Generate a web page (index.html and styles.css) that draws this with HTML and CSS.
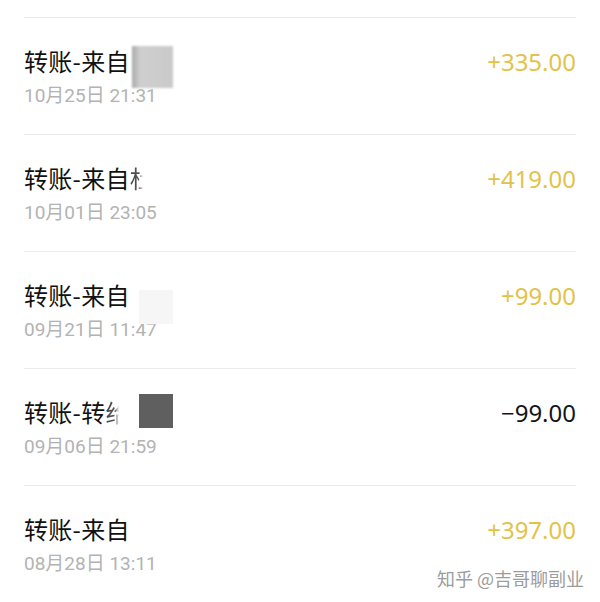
FILE: index.html
```html
<!DOCTYPE html>
<html lang="zh-CN">
<head>
    <meta charset="UTF-8">
    <meta name="viewport" content="width=device-width, initial-scale=1.0">
    <title>账单</title>
    <link rel="stylesheet" href="styles.css">
</head>
<body>
    <div class="bill-list">
        <div class="bill-row">
            <div class="bill-info">
                <div class="bill-title">转账-来自</div>
                <div class="bill-date">10月25日 21:31</div>
            </div>
            <div class="bill-amount income">+335.00</div>
            <span class="mask mask-blur"></span>
        </div>
        <div class="bill-row">
            <div class="bill-info">
                <div class="bill-title">转账-来自<span class="fade">杜</span></div>
                <div class="bill-date">10月01日 23:05</div>
            </div>
            <div class="bill-amount income">+419.00</div>
        </div>
        <div class="bill-row">
            <div class="bill-info">
                <div class="bill-title">转账-来自</div>
                <div class="bill-date">09月21日 11:47</div>
            </div>
            <div class="bill-amount income">+99.00</div>
            <span class="mask mask-light"></span>
        </div>
        <div class="bill-row">
            <div class="bill-info">
                <div class="bill-title">转账-转<span class="fade">给</span></div>
                <div class="bill-date">09月06日 21:59</div>
            </div>
            <div class="bill-amount">−99.00</div>
            <span class="mask mask-dark"></span>
        </div>
        <div class="bill-row">
            <div class="bill-info">
                <div class="bill-title">转账-来自</div>
                <div class="bill-date">08月28日 13:11</div>
            </div>
            <div class="bill-amount income">+397.00</div>
        </div>
    </div>
    <div class="watermark">知乎 @吉哥聊副业</div>
</body>
</html>
```

FILE: styles.css
```css
html, body {
    margin: 0;
    height: 602px;
    overflow: hidden;
    background: #fff;
}
body {
    font-family: "Noto Sans CJK SC", "Noto Sans", sans-serif;
    position: relative;
}
.bill-list {
    padding: 17px 24px 0 24px;
}
.bill-row {
    position: relative;
    display: flex;
    justify-content: space-between;
    align-items: flex-start;
    height: 116px;
    border-top: 1px solid #ececec;
}
.bill-info {
    padding-top: 28px;
}
.bill-title {
    font-size: 24px;
    line-height: 30px;
    color: #111;
    letter-spacing: 0.3px;
}
.bill-title .fade {
    background: linear-gradient(to right, #444 0, #555 35%, rgba(255, 255, 255, 0) 55%);
    -webkit-background-clip: text;
    background-clip: text;
    color: transparent;
}
.bill-date {
    margin-top: 8px;
    font-family: Roboto, "Noto Sans CJK SC", sans-serif;
    font-size: 19px;
    line-height: 24px;
    color: #b3b3b3;
}
.bill-amount {
    padding-top: 29px;
    font-family: "Noto Sans", Roboto, sans-serif;
    font-size: 24px;
    line-height: 30px;
    color: #151515;
}
.bill-amount.income {
    color: #e3c24a;
}
.mask {
    position: absolute;
    left: 115px;
    width: 34px;
}
.mask-blur {
    top: 28px;
    height: 42px;
    left: 108px;
    width: 41px;
    background: linear-gradient(to right, #a9a9a9 0, #cfcfcf 8px, #cacaca 100%);
    filter: blur(1px);
}
.mask-light {
    top: 38px;
    height: 34px;
    background: #f6f6f6;
}
.mask-dark {
    top: 25px;
    height: 34px;
    background: #5f5f5f;
}
.watermark {
    position: absolute;
    right: 16px;
    bottom: 12px;
    font-size: 18px;
    line-height: 24px;
    color: #9c9c9c;
    text-shadow: 0 0 2px #fff, 1px 1px 0 #fff;
}
```
